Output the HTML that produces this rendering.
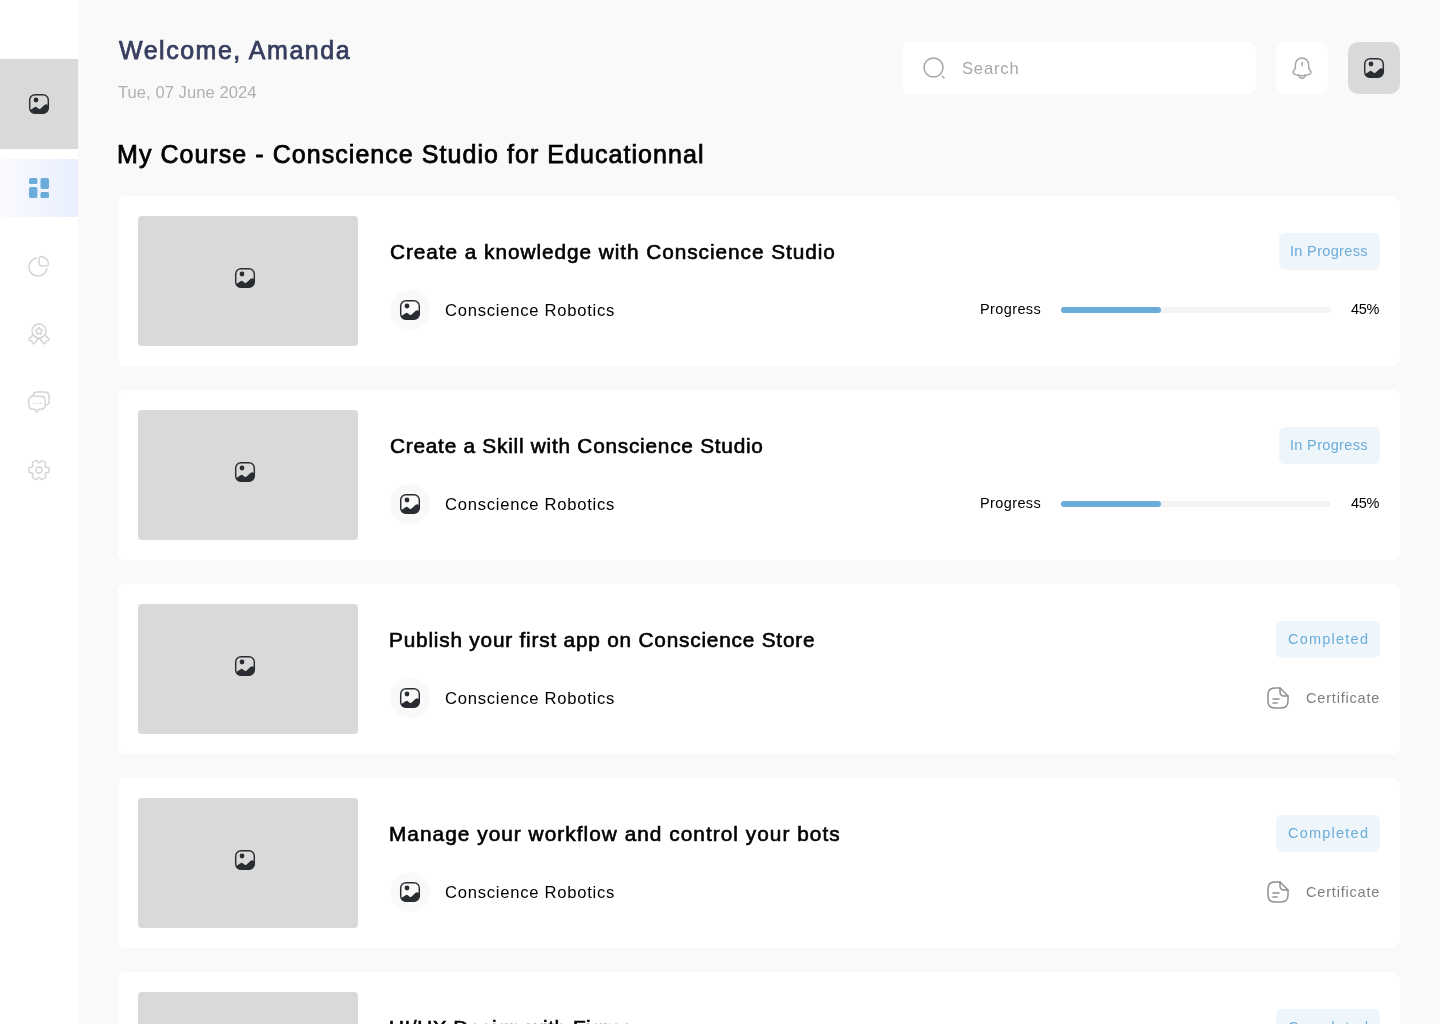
<!DOCTYPE html>
<html lang="en">
<head>
<meta charset="utf-8">
<title>My Course</title>
<style>
*{box-sizing:border-box;margin:0;padding:0}
html,body{width:1440px;height:1024px;overflow:hidden;background:#F9F9F9;font-family:"Liberation Sans",sans-serif;color:#000}
#side{position:absolute;left:0;top:0;width:78px;height:1024px;background:#fff}
#logo{position:absolute;left:0;top:59px;width:78px;height:90px;background:#D9D9D9}
#active{position:absolute;left:0;top:159px;width:78px;height:58px;background:linear-gradient(90deg,#FAFBFF 0%,#E8EEFD 100%)}
svg{position:absolute;display:block;overflow:visible}
.t{position:absolute;white-space:nowrap;line-height:1;will-change:transform}
.md{-webkit-text-stroke:0.03em currentColor}
.c1{color:#363D5E}.c2{color:#B3B0B0}.c3{color:#ABA6A6}.c4{color:#6BACD9}.c5{color:#7E7E7E}
.nav{fill:none;stroke:#D3D5D7;stroke-width:1.5;stroke-linecap:round;stroke-linejoin:round}
.hd{fill:none;stroke:#A9A4A4;stroke-width:1.5;stroke-linecap:round;stroke-linejoin:round}
.dc{fill:none;stroke:#8E9092;stroke-width:1.5;stroke-linecap:round;stroke-linejoin:round}
.box{position:absolute;background:#fff;border-radius:8px}
.card{position:absolute;left:118px;width:1282px;height:170px;background:#fff;border-radius:8px}
.thumb{position:absolute;left:138px;width:220px;height:130px;background:#D9D9D9;border-radius:4px}
.av{position:absolute;left:390px;width:40px;height:40px;border-radius:50%;background:#F9F9F9}
.badge{position:absolute;height:37px;border-radius:6px;background:#EFF6FB}
.bar{position:absolute;left:1061px;width:270px;height:6px;border-radius:3px;background:#F3F3F3}
.bar i{position:absolute;left:0;top:0;width:100px;height:6px;border-radius:3px;background:#6BACD9}
</style>
</head>
<body>
<div id="side"><div id="logo"></div><div id="active"></div><svg style="left:27px;top:92px" width="24" height="24" viewBox="0 0 24 24"><rect x="2.700" y="2.700" width="18.600" height="18.600" rx="5.4" fill="none" stroke="#292D32" stroke-width="1.45"/><circle cx="9" cy="8" r="2.4" fill="#292D32"/><path d="M2.6 18.6 L7.6 15.2 Q8.9 14.4 10.1 15.4 L11.3 16.5 Q12.4 17.4 13.6 16.4 L17.7 12.8 Q19.1 11.7 20.5 12.8 L21.4 13.6 V16 A5.4 5.4 0 0 1 16 21.4 H8 A5.4 5.4 0 0 1 2.6 18.6 Z" fill="#292D32"/></svg><svg class="" style="left:27px;top:176px" width="24" height="24" viewBox="0 0 24 24" fill="#6BACD9"><rect x="2" y="2" width="8.4" height="6" rx="1.6"/><rect x="2" y="10.9" width="8.4" height="11.1" rx="1.8"/><rect x="13.5" y="2" width="8.5" height="11" rx="1.8"/><rect x="13.5" y="16" width="8.5" height="6" rx="1.6"/></svg><svg class="nav" style="left:27px;top:254px" width="24" height="24" viewBox="0 0 24 24" ><path d="M18.32 12c2.6 0 3.68-1 2.72-4.28-.65-2.21-2.55-4.11-4.76-4.76C13 2 12 3.08 12 5.68v2.88C12 11 13 12 15 12h3.32Z"/><path d="M20 14.7a9.09 9.09 0 0 1-10.42 7.17c-3.79-.61-6.84-3.66-7.46-7.45A9.1 9.1 0 0 1 9.26 4.01"/></svg><svg class="nav" style="left:27px;top:322px" width="24" height="24" viewBox="0 0 24 24" ><path d="M19 9c0 1.45-.43 2.78-1.17 3.89a6.985 6.985 0 0 1-4.78 3.02c-.34.06-.69.09-1.05.09-.36 0-.71-.03-1.05-.09a6.985 6.985 0 0 1-4.78-3.02A6.968 6.968 0 0 1 5 9c0-3.870 3.13-7 7-7s7 3.13 7 7Z"/><path d="m21.25 18.47-1.65.39c-.37.09-.66.37-.74.74l-.35 1.47a1 1 0 0 1-1.74.41L12 16l-4.77 5.49a1 1 0 0 1-1.74-.41l-.35-1.47a.996.996 0 0 0-.74-.74l-1.65-.39a1.003 1.003 0 0 1-.48-1.68l3.9-3.9a6.985 6.985 0 0 0 4.78 3.02c.34.06.69.09 1.05.09.36 0 .71-.03 1.05-.09 1.99-.29 3.7-1.42 4.78-3.02l3.9 3.9c.55.54.28 1.5-.48 1.68Z"/><path d="m12.58 5.98.59 1.18c.08.16.29.32.48.35l1.07.18c.68.11.84.61.35 1.1l-.83.83c-.14.14-.22.41-.17.61l.24 1.030c.19.81-.24 1.13-.96.7l-1-.59a.701.701 0 0 0-.66 0l-1 .59c-.72.42-1.15.11-.96-.7l.24-1.030c.04-.19-.03-.47-.17-.61l-.83-.83c-.49-.49-.33-.98.35-1.1l1.070-.18c.18-.03.39-.19.47-.35l.59-1.18c.29-.64.81-.64 1.13 0Z"/></svg><svg class="nav" style="left:27px;top:390px" width="24" height="24" viewBox="0 0 24 24" ><path d="M6.1 6.2 V6.3 Q6.1 2 10.4 2 H17.700 Q22.200 2 22.200 6.500 V10.700 Q22.200 14.900 18.700 15.150"/><path d="M6.300 6.200 H13.700 Q18.200 6.200 18.200 10.700 V14.700 Q18.200 19.200 13.700 19.200 H12.100 Q11.700 19.200 11.450 19.550 L10.500 21.500 Q9.800 22.700 9.100 21.500 L8.150 19.550 Q7.900 19.200 7.500 19.200 H6.300 Q1.800 19.200 1.800 14.700 V10.700 Q1.800 6.200 6.300 6.200 Z"/><path d="M6.500 13.300h.01M10 13.300h.01M13.500 13.300h.01" stroke-width="1.7"/></svg><svg class="nav" style="left:27px;top:458px" width="24" height="24" viewBox="0 0 24 24" ><path d="M12 15a3 3 0 1 0 0-6 3 3 0 0 0 0 6Z"/><path d="M2 12.880v-1.760c0-1.040.85-1.900 1.900-1.900 1.810 0 2.550-1.280 1.640-2.850-.52-.9-.21-2.070.7-2.590l1.730-.99c.79-.47 1.810-.19 2.280.6l.11.19c.9 1.570 2.380 1.570 3.290 0l.11-.19c.47-.79 1.490-1.070 2.280-.6l1.730.99c.91.52 1.220 1.690.7 2.590-.91 1.570-.17 2.850 1.640 2.850 1.040 0 1.900.85 1.900 1.900v1.760c0 1.040-.85 1.900-1.900 1.900-1.810 0-2.550 1.280-1.640 2.850.52.910.21 2.070-.7 2.590l-1.730.99c-.79.47-1.810.19-2.280-.6l-.11-.19c-.9-1.570-2.380-1.570-3.290 0l-.11.19c-.47.79-1.490 1.070-2.280.6l-1.730-.99a1.899 1.899 0 0 1-.7-2.590c.91-1.570.17-2.850-1.640-2.850-1.050 0-1.900-.86-1.900-1.900Z"/></svg></div>
<div id="welcome" class="t md c1" style="left:119.00px;top:38.00px;font-size:25px;letter-spacing:1.513px">Welcome, Amanda</div>
<div id="date" class="t c2" style="left:118.00px;top:85.00px;font-size:16.6px;letter-spacing:0.044px">Tue, 07 June 2024</div>
<div class="box" style="left:902px;top:42px;width:354px;height:52px"></div><svg class="hd" style="left:922px;top:56px" width="24" height="24" viewBox="0 0 24 24" ><circle cx="11.5" cy="11.5" r="9.5"/><path d="M20.300 20.300 22 22"/></svg><div id="search" class="t c3" style="left:962.00px;top:61.00px;font-size:16.6px;letter-spacing:0.806px">Search</div>
<div class="box" style="left:1276px;top:42px;width:52px;height:52px;border-radius:10px"></div><svg class="hd" style="left:1290px;top:56px" width="24" height="24" viewBox="0 0 24 24" ><path d="M12 6.440v3.330"/><path d="M12.020 2C8.340 2 5.360 4.980 5.360 8.660v2.100c0 .68-.28 1.700-.63 2.280l-1.270 2.120c-.78 1.310-.24 2.770 1.200 3.250a23.340 23.340 0 0 0 14.730 0 2.220 2.220 0 0 0 1.200-3.250l-1.270-2.120c-.35-.58-.63-1.610-.63-2.280v-2.100C18.680 5 15.680 2 12.020 2Z"/><path d="M15.330 18.820c0 1.830-1.500 3.330-3.330 3.330-.91 0-1.750-.38-2.350-.98-.6-.6-.98-1.440-.98-2.350"/></svg><div class="box" style="left:1348px;top:42px;width:52px;height:52px;border-radius:10px;background:#D9D9D9"></div><svg style="left:1362px;top:56px" width="24" height="24" viewBox="0 0 24 24"><rect x="2.700" y="2.700" width="18.600" height="18.600" rx="5.4" fill="none" stroke="#292D32" stroke-width="1.45"/><circle cx="9" cy="8" r="2.4" fill="#292D32"/><path d="M2.6 18.6 L7.6 15.2 Q8.9 14.4 10.1 15.4 L11.3 16.5 Q12.4 17.4 13.6 16.4 L17.7 12.8 Q19.1 11.7 20.5 12.8 L21.4 13.6 V16 A5.4 5.4 0 0 1 16 21.4 H8 A5.4 5.4 0 0 1 2.6 18.6 Z" fill="#292D32"/></svg>
<div id="head" class="t md" style="left:117.00px;top:142.00px;font-size:25px;letter-spacing:1.051px">My Course - Conscience Studio for Educationnal</div>
<div class="card" style="top:196px"></div><div class="thumb" style="top:216px"></div><svg style="left:233px;top:266px" width="24" height="24" viewBox="0 0 24 24"><rect x="2.700" y="2.700" width="18.600" height="18.600" rx="5.4" fill="none" stroke="#292D32" stroke-width="1.45"/><circle cx="9" cy="8" r="2.4" fill="#292D32"/><path d="M2.6 18.6 L7.6 15.2 Q8.9 14.4 10.1 15.4 L11.3 16.5 Q12.4 17.4 13.6 16.4 L17.7 12.8 Q19.1 11.7 20.5 12.8 L21.4 13.6 V16 A5.4 5.4 0 0 1 16 21.4 H8 A5.4 5.4 0 0 1 2.6 18.6 Z" fill="#292D32"/></svg><div id="title0" class="t md" style="left:390.00px;top:242.00px;font-size:20.8px;letter-spacing:0.948px">Create a knowledge with Conscience Studio</div><div class="av" style="top:290px"></div><svg style="left:398px;top:298px" width="24" height="24" viewBox="0 0 24 24"><rect x="2.700" y="2.700" width="18.600" height="18.600" rx="5.4" fill="none" stroke="#292D32" stroke-width="1.45"/><circle cx="9" cy="8" r="2.4" fill="#292D32"/><path d="M2.6 18.6 L7.6 15.2 Q8.9 14.4 10.1 15.4 L11.3 16.5 Q12.4 17.4 13.6 16.4 L17.7 12.8 Q19.1 11.7 20.5 12.8 L21.4 13.6 V16 A5.4 5.4 0 0 1 16 21.4 H8 A5.4 5.4 0 0 1 2.6 18.6 Z" fill="#292D32"/></svg><div id="org0" class="t " style="left:445.00px;top:303.00px;font-size:16.6px;letter-spacing:0.748px">Conscience Robotics</div><div class="badge" style="left:1279px;width:101px;top:233px"></div><div id="badge0" class="t c4" style="left:1290.00px;top:244.00px;font-size:14.5px;letter-spacing:0.334px">In Progress</div><div id="prog0" class="t " style="left:980.00px;top:302.00px;font-size:14.5px;letter-spacing:0.387px">Progress</div><div class="bar" style="top:307px"><i></i></div><div id="pct0" class="t " style="left:1351.00px;top:302.00px;font-size:14.5px;letter-spacing:-0.329px">45%</div>
<div class="card" style="top:390px"></div><div class="thumb" style="top:410px"></div><svg style="left:233px;top:460px" width="24" height="24" viewBox="0 0 24 24"><rect x="2.700" y="2.700" width="18.600" height="18.600" rx="5.4" fill="none" stroke="#292D32" stroke-width="1.45"/><circle cx="9" cy="8" r="2.4" fill="#292D32"/><path d="M2.6 18.6 L7.6 15.2 Q8.9 14.4 10.1 15.4 L11.3 16.5 Q12.4 17.4 13.6 16.4 L17.7 12.8 Q19.1 11.7 20.5 12.8 L21.4 13.6 V16 A5.4 5.4 0 0 1 16 21.4 H8 A5.4 5.4 0 0 1 2.6 18.6 Z" fill="#292D32"/></svg><div id="title1" class="t md" style="left:390.00px;top:436.00px;font-size:20.8px;letter-spacing:0.758px">Create a Skill with Conscience Studio</div><div class="av" style="top:484px"></div><svg style="left:398px;top:492px" width="24" height="24" viewBox="0 0 24 24"><rect x="2.700" y="2.700" width="18.600" height="18.600" rx="5.4" fill="none" stroke="#292D32" stroke-width="1.45"/><circle cx="9" cy="8" r="2.4" fill="#292D32"/><path d="M2.6 18.6 L7.6 15.2 Q8.9 14.4 10.1 15.4 L11.3 16.5 Q12.4 17.4 13.6 16.4 L17.7 12.8 Q19.1 11.7 20.5 12.8 L21.4 13.6 V16 A5.4 5.4 0 0 1 16 21.4 H8 A5.4 5.4 0 0 1 2.6 18.6 Z" fill="#292D32"/></svg><div id="org1" class="t " style="left:445.00px;top:497.00px;font-size:16.6px;letter-spacing:0.748px">Conscience Robotics</div><div class="badge" style="left:1279px;width:101px;top:427px"></div><div id="badge1" class="t c4" style="left:1290.00px;top:438.00px;font-size:14.5px;letter-spacing:0.334px">In Progress</div><div id="prog1" class="t " style="left:980.00px;top:496.00px;font-size:14.5px;letter-spacing:0.387px">Progress</div><div class="bar" style="top:501px"><i></i></div><div id="pct1" class="t " style="left:1351.00px;top:496.00px;font-size:14.5px;letter-spacing:-0.329px">45%</div>
<div class="card" style="top:584px"></div><div class="thumb" style="top:604px"></div><svg style="left:233px;top:654px" width="24" height="24" viewBox="0 0 24 24"><rect x="2.700" y="2.700" width="18.600" height="18.600" rx="5.4" fill="none" stroke="#292D32" stroke-width="1.45"/><circle cx="9" cy="8" r="2.4" fill="#292D32"/><path d="M2.6 18.6 L7.6 15.2 Q8.9 14.4 10.1 15.4 L11.3 16.5 Q12.4 17.4 13.6 16.4 L17.7 12.8 Q19.1 11.7 20.5 12.8 L21.4 13.6 V16 A5.4 5.4 0 0 1 16 21.4 H8 A5.4 5.4 0 0 1 2.6 18.6 Z" fill="#292D32"/></svg><div id="title2" class="t md" style="left:389.00px;top:630.00px;font-size:20.8px;letter-spacing:0.793px">Publish your first app on Conscience Store</div><div class="av" style="top:678px"></div><svg style="left:398px;top:686px" width="24" height="24" viewBox="0 0 24 24"><rect x="2.700" y="2.700" width="18.600" height="18.600" rx="5.4" fill="none" stroke="#292D32" stroke-width="1.45"/><circle cx="9" cy="8" r="2.4" fill="#292D32"/><path d="M2.6 18.6 L7.6 15.2 Q8.9 14.4 10.1 15.4 L11.3 16.5 Q12.4 17.4 13.6 16.4 L17.7 12.8 Q19.1 11.7 20.5 12.8 L21.4 13.6 V16 A5.4 5.4 0 0 1 16 21.4 H8 A5.4 5.4 0 0 1 2.6 18.6 Z" fill="#292D32"/></svg><div id="org2" class="t " style="left:445.00px;top:691.00px;font-size:16.6px;letter-spacing:0.748px">Conscience Robotics</div><div class="badge" style="left:1276px;width:104px;top:621px"></div><div id="badge2" class="t c4" style="left:1288.00px;top:632.00px;font-size:14.5px;letter-spacing:1.231px">Completed</div><svg class="dc" style="left:1266px;top:686px" width="24" height="24" viewBox="0 0 24 24" ><path d="M22 10v5c0 5-2 7-7 7H9c-5 0-7-2-7-7V9c0-5 2-7 7-7h5"/><path d="M22 10h-4c-3 0-4-1-4-4V2l8 8ZM7 13h6M7 17h4"/></svg><div id="cert2" class="t c5" style="left:1306.00px;top:691.00px;font-size:14.5px;letter-spacing:0.813px">Certificate</div>
<div class="card" style="top:778px"></div><div class="thumb" style="top:798px"></div><svg style="left:233px;top:848px" width="24" height="24" viewBox="0 0 24 24"><rect x="2.700" y="2.700" width="18.600" height="18.600" rx="5.4" fill="none" stroke="#292D32" stroke-width="1.45"/><circle cx="9" cy="8" r="2.4" fill="#292D32"/><path d="M2.6 18.6 L7.6 15.2 Q8.9 14.4 10.1 15.4 L11.3 16.5 Q12.4 17.4 13.6 16.4 L17.7 12.8 Q19.1 11.7 20.5 12.8 L21.4 13.6 V16 A5.4 5.4 0 0 1 16 21.4 H8 A5.4 5.4 0 0 1 2.6 18.6 Z" fill="#292D32"/></svg><div id="title3" class="t md" style="left:389.00px;top:824.00px;font-size:20.8px;letter-spacing:1.038px">Manage your workflow and control your bots</div><div class="av" style="top:872px"></div><svg style="left:398px;top:880px" width="24" height="24" viewBox="0 0 24 24"><rect x="2.700" y="2.700" width="18.600" height="18.600" rx="5.4" fill="none" stroke="#292D32" stroke-width="1.45"/><circle cx="9" cy="8" r="2.4" fill="#292D32"/><path d="M2.6 18.6 L7.6 15.2 Q8.9 14.4 10.1 15.4 L11.3 16.5 Q12.4 17.4 13.6 16.4 L17.7 12.8 Q19.1 11.7 20.5 12.8 L21.4 13.6 V16 A5.4 5.4 0 0 1 16 21.4 H8 A5.4 5.4 0 0 1 2.6 18.6 Z" fill="#292D32"/></svg><div id="org3" class="t " style="left:445.00px;top:885.00px;font-size:16.6px;letter-spacing:0.748px">Conscience Robotics</div><div class="badge" style="left:1276px;width:104px;top:815px"></div><div id="badge3" class="t c4" style="left:1288.00px;top:826.00px;font-size:14.5px;letter-spacing:1.231px">Completed</div><svg class="dc" style="left:1266px;top:880px" width="24" height="24" viewBox="0 0 24 24" ><path d="M22 10v5c0 5-2 7-7 7H9c-5 0-7-2-7-7V9c0-5 2-7 7-7h5"/><path d="M22 10h-4c-3 0-4-1-4-4V2l8 8ZM7 13h6M7 17h4"/></svg><div id="cert3" class="t c5" style="left:1306.00px;top:885.00px;font-size:14.5px;letter-spacing:0.813px">Certificate</div>
<div class="card" style="top:972px"></div><div class="thumb" style="top:992px"></div><svg style="left:233px;top:1042px" width="24" height="24" viewBox="0 0 24 24"><rect x="2.700" y="2.700" width="18.600" height="18.600" rx="5.4" fill="none" stroke="#292D32" stroke-width="1.45"/><circle cx="9" cy="8" r="2.4" fill="#292D32"/><path d="M2.6 18.6 L7.6 15.2 Q8.9 14.4 10.1 15.4 L11.3 16.5 Q12.4 17.4 13.6 16.4 L17.7 12.8 Q19.1 11.7 20.5 12.8 L21.4 13.6 V16 A5.4 5.4 0 0 1 16 21.4 H8 A5.4 5.4 0 0 1 2.6 18.6 Z" fill="#292D32"/></svg><div id="title4" class="t md" style="left:389.00px;top:1018.00px;font-size:20.8px;letter-spacing:0.521px">UI/UX Design with Figma</div><div class="av" style="top:1066px"></div><svg style="left:398px;top:1074px" width="24" height="24" viewBox="0 0 24 24"><rect x="2.700" y="2.700" width="18.600" height="18.600" rx="5.4" fill="none" stroke="#292D32" stroke-width="1.45"/><circle cx="9" cy="8" r="2.4" fill="#292D32"/><path d="M2.6 18.6 L7.6 15.2 Q8.9 14.4 10.1 15.4 L11.3 16.5 Q12.4 17.4 13.6 16.4 L17.7 12.8 Q19.1 11.7 20.5 12.8 L21.4 13.6 V16 A5.4 5.4 0 0 1 16 21.4 H8 A5.4 5.4 0 0 1 2.6 18.6 Z" fill="#292D32"/></svg><div id="org4" class="t " style="left:445.00px;top:1079.00px;font-size:16.6px;letter-spacing:0.748px">Conscience Robotics</div><div class="badge" style="left:1276px;width:104px;top:1009px"></div><div id="badge4" class="t c4" style="left:1288.00px;top:1020.00px;font-size:14.5px;letter-spacing:1.231px">Completed</div><svg class="dc" style="left:1266px;top:1074px" width="24" height="24" viewBox="0 0 24 24" ><path d="M22 10v5c0 5-2 7-7 7H9c-5 0-7-2-7-7V9c0-5 2-7 7-7h5"/><path d="M22 10h-4c-3 0-4-1-4-4V2l8 8ZM7 13h6M7 17h4"/></svg><div id="cert4" class="t c5" style="left:1306.00px;top:1079.00px;font-size:14.5px;letter-spacing:0.813px">Certificate</div>
</body>
</html>
